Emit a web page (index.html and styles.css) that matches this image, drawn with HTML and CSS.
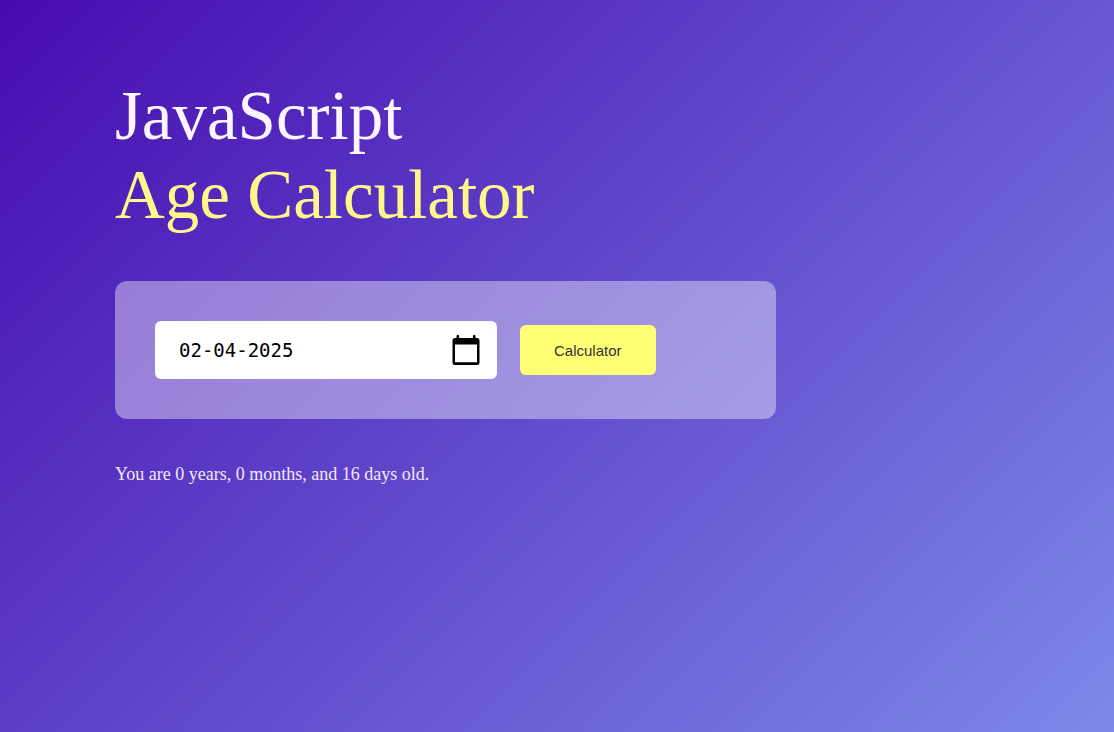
FILE: index.html
```
<!DOCTYPE html>
<html lang="en">
<head>
    <meta charset="UTF-8">
    <meta name="viewport" content="width=device-width, initial-scale=1.0">
    <title>Age Calculator</title>
    <link rel="stylesheet" href="styles.css">
</head>
<body>
    <div class="container">
        <div class="calculator">
            <h1>JavaScript <br><span>Age Calculator</span></h1>
            <div class="input-box">
                <div class="date-field">
                    <input type="text" id="date" value="02-04-2025" aria-label="Date of birth">
                    <button type="button" class="picker" aria-label="Open calendar">
                        <svg viewBox="0 0 28 30" width="28" height="30">
                            <path fill-rule="evenodd" d="M4.500 1.200a1.300 1.300 0 0 1 2.600 0V3h13.800V1.200a1.300 1.300 0 0 1 2.600 0V3h1.500a2.500 2.500 0 0 1 2.500 2.500v22a2.500 2.500 0 0 1-2.500 2.500H3A2.500 2.500 0 0 1 .5 27.500v-22A2.500 2.500 0 0 1 3 3h1.500zM3 9.500v17.700h22V9.500z"/>
                        </svg>
                    </button>
                </div>
                <button type="button" class="btn">Calculator</button>
            </div>
            <p id="result">You are 0 years, 0 months, and 16 days old.</p>
        </div>
    </div>
</body>
</html>
```

FILE: styles.css
```
* {
    margin: 0;
    padding: 0;
    box-sizing: border-box;
}
body {
    font-family: "Liberation Serif", "Times New Roman", serif;
}
.container {
    width: 100%;
    min-height: 100vh;
    padding: 77px 20px 20px 115px;
    background: linear-gradient(135deg, #460bb0, #7c89e8);
    color: #fff;
}
.calculator {
    width: 100%;
    max-width: 661px;
}
.calculator h1 {
    font-size: 69px;
    line-height: 79px;
    font-weight: normal;
    color: #fdf5ff;
}
.calculator h1 span {
    color: #fff78c;
}
.input-box {
    margin: 46px 0 44px;
    padding: 40px;
    border-radius: 12px;
    background: rgba(255, 255, 255, 0.4);
    display: flex;
    align-items: center;
    gap: 23px;
}
.date-field {
    position: relative;
    flex: 0 1 342px;
    min-width: 0;
}
.date-field input {
    display: block;
    width: 100%;
    height: 58px;
    padding: 0 60px 0 24px;
    border: 0;
    outline: 0;
    border-radius: 6px;
    background: #fff;
    color: #000;
    font-family: "DejaVu Sans Mono", monospace;
    font-size: 19px;
}
/* calendar icon inside the date box */
.picker {
    position: absolute;
    top: 14px;
    right: 17px;
    border: 0;
    background: none;
    cursor: pointer;
}
.picker svg {
    display: block;
}
.btn {
    height: 50px;
    padding: 0 34px;
    border: 0;
    border-radius: 6px;
    background: #ffff76;
    color: #333;
    font-family: "Liberation Sans", Arial, sans-serif;
    font-size: 15px;
    cursor: pointer;
}
#result {
    font-size: 18px;
    line-height: 22px;
    color: #f3e9ff;
}
```
